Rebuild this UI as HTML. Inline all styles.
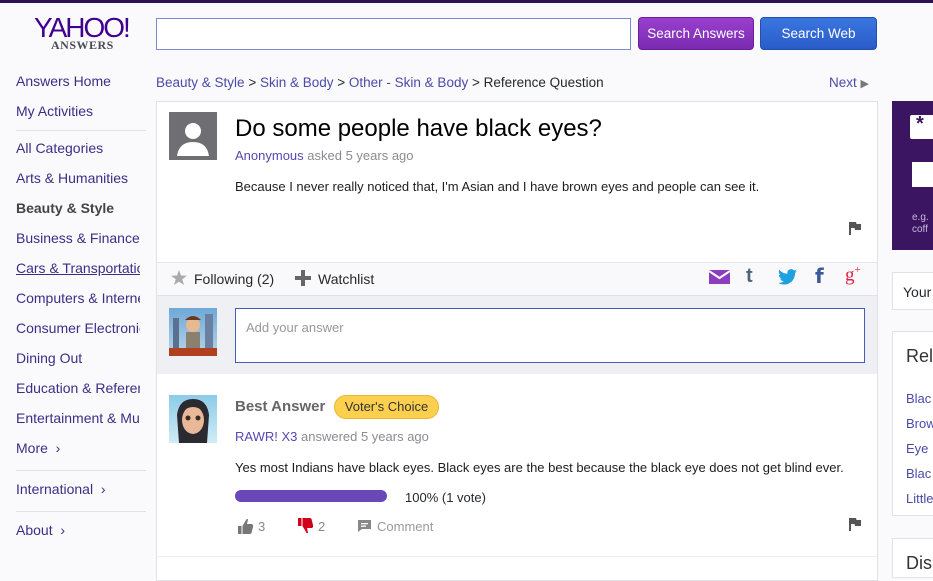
<!DOCTYPE html>
<html><head><meta charset="utf-8"><style>
*{margin:0;padding:0;box-sizing:border-box}
body{width:933px;height:571px;overflow:hidden;background:#fafafc;font-family:"Liberation Sans",Arial,sans-serif;position:relative;color:#26282a}
.a{position:absolute}
.top{left:0;top:0;width:933px;height:3px;background:#2d1152}
.nav a{position:absolute;left:16px;font-size:14px;color:#3b2e86;text-decoration:none;white-space:nowrap;width:124px;overflow:hidden;display:block}
.hr{position:absolute;left:16px;width:130px;height:1px;background:#e2e2e6}
.bc{font-size:13.5px;color:#4a4aa8}
.panel{left:156px;top:101px;width:722px;height:480px;background:#fff;border:1px solid #e2e2e6}
.mb{color:#5548b0}
.gray{color:#8b8b93}
</style></head><body>
<div class="a top"></div>
<div class="a" style="left:34px;top:13px;font-size:28px;color:#400090;letter-spacing:-2px;line-height:30px">YAHOO!</div>
<div class="a" style="left:51px;top:38px;font-size:12px;color:#4a4a55;font-family:'Liberation Serif',serif;font-weight:bold;letter-spacing:0.5px">ANSWERS</div>
<div class="a" style="left:156px;top:18px;width:475px;height:32px;border:1px solid #7b8ad0;background:#fff"></div>
<div class="a" style="left:638px;top:17px;width:116px;height:33px;border-radius:4px;background:linear-gradient(#9a3fcf,#7a2bb0);border:1px solid #6a1f9a;color:#fff;font-size:13.5px;text-align:center;line-height:31px">Search Answers</div>
<div class="a" style="left:760px;top:17px;width:117px;height:33px;border-radius:4px;background:linear-gradient(#3a76e0,#2a5cc8);border:1px solid #2350b0;color:#fff;font-size:13.5px;text-align:center;line-height:31px">Search Web</div>
<div class="nav">
<a style="top:73px">Answers Home</a>
<a style="top:103px">My Activities</a>
<div class="hr" style="top:130px"></div>
<a style="top:140px">All Categories</a>
<a style="top:170px">Arts &amp; Humanities</a>
<a style="top:200px;font-weight:bold;color:#444">Beauty &amp; Style</a>
<a style="top:230px">Business &amp; Finance</a>
<a style="top:260px;text-decoration:underline">Cars &amp; Transportation</a>
<a style="top:290px">Computers &amp; Internet</a>
<a style="top:320px">Consumer Electronics</a>
<a style="top:350px">Dining Out</a>
<a style="top:380px">Education &amp; Reference</a>
<a style="top:410px">Entertainment &amp; Music</a>
<a style="top:440px">More &nbsp;›</a>
<div class="hr" style="top:470px"></div>
<a style="top:481px">International &nbsp;›</a>
<div class="hr" style="top:511px"></div>
<a style="top:522px">About &nbsp;›</a>
</div>
<div class="a bc" style="left:156px;top:75px"><span>Beauty &amp; Style</span> <span style="color:#26282a">&gt;</span> Skin &amp; Body <span style="color:#26282a">&gt;</span> Other - Skin &amp; Body <span style="color:#26282a">&gt;</span> <span style="color:#26282a">Reference Question</span></div>
<div class="a bc" style="left:829px;top:75px">Next <span style="color:#777;font-size:11px">▶</span></div>
<div class="a panel"></div>
<div class="a" style="left:169px;top:112px;width:48px;height:48px;background:#6f6f73;overflow:hidden"><svg width="48" height="48"><circle cx="24" cy="19" r="8" fill="#fff"/><path d="M8 44 Q10 30 24 30 Q38 30 40 44Z" fill="#fff"/></svg></div>
<div class="a" style="left:235px;top:115px;font-size:24px;color:#000">Do some people have black eyes?</div>
<div class="a" style="left:235px;top:148px;font-size:13px"><span class="mb">Anonymous</span> <span class="gray">asked 5 years ago</span></div>
<div class="a" style="left:235px;top:179px;font-size:13px;color:#1d1d1f">Because I never really noticed that, I'm Asian and I have brown eyes and people can see it.</div>
<svg class="a" style="left:849px;top:222px" width="12" height="13"><rect x="0" y="0" width="2" height="13" fill="#555"/><path d="M2 0 H7 L7.5 2 H12 V8 H6 L5.5 6 H2Z" fill="#555"/></svg>
<div class="a" style="left:157px;top:262px;width:720px;height:33px;background:#f9f9fb;border-top:1px solid #e6e6ea"></div>
<svg class="a" style="left:171px;top:270px" width="16" height="15"><path d="M8 0 L10 5.5 L16 5.7 L11.2 9.3 L13 15 L8 11.6 L3 15 L4.8 9.3 L0 5.7 L6 5.5Z" fill="#aaa"/></svg>
<div class="a" style="left:194px;top:271px;font-size:14px;color:#26282a">Following (2)</div>
<svg class="a" style="left:295px;top:270px" width="16" height="16"><rect x="6" y="0" width="4" height="16" fill="#666"/><rect x="0" y="6" width="16" height="4" fill="#666"/></svg>
<div class="a" style="left:318px;top:271px;font-size:14px">Watchlist</div>
<svg class="a" style="left:709px;top:270px" width="21" height="15"><rect width="21" height="14" fill="#8a3fc0"/><path d="M0 1 L10.5 8 L21 1" stroke="#fff" stroke-width="2" fill="none"/></svg>
<div class="a" style="left:746px;top:265px;font-size:20px;font-weight:bold;color:#50647a">t</div>
<svg class="a" style="left:778px;top:269px" width="19" height="16" viewBox="0 0 24 20"><path d="M24 2.4c-.9.4-1.8.7-2.8.8 1-.6 1.8-1.600 2.2-2.7-1 .6-2 1-3.1 1.2C19.3.7 18 0 16.6 0c-2.7 0-4.9 2.2-4.9 4.9 0 .4 0 .8.1 1.1C7.7 5.8 4.1 3.9 1.7.9c-.4.7-.7 1.6-.7 2.5 0 1.7.9 3.2 2.2 4.1-.8 0-1.6-.2-2.2-.6v.1c0 2.4 1.7 4.4 3.9 4.8-.4.1-.8.2-1.3.2-.3 0-.6 0-.9-.1.6 2 2.4 3.4 4.6 3.4-1.7 1.3-3.8 2.1-6.1 2.1-.4 0-.8 0-1.2-.1 2.2 1.4 4.8 2.2 7.5 2.2 9.1 0 14-7.5 14-14v-.6c1-.7 1.8-1.6 2.5-2.5z" fill="#1da1e0"/></svg>
<div class="a" style="left:815px;top:264px;font-size:20px;font-weight:bold;color:#3b5998;font-family:'DejaVu Sans',sans-serif">f</div>
<div class="a" style="left:845px;top:264px;font-size:19px;color:#dd2244;font-family:'Liberation Serif',serif">g<sup style="font-size:11px">+</sup></div>
<div class="a" style="left:157px;top:295px;width:720px;height:79px;background:#eef0f4;border-top:1px solid #e0e2e8"></div>
<div class="a" style="left:169px;top:308px;width:48px;height:48px;background:linear-gradient(#6fa8d8,#b8d4e8);overflow:hidden"><svg width="48" height="48"><rect x="4" y="10" width="6" height="30" fill="#5a7090"/><rect x="36" y="6" width="8" height="34" fill="#6a80a0"/><circle cx="24" cy="17" r="7" fill="#e8b890"/><path d="M16 12 Q24 4 32 12" fill="#6a3a20"/><rect x="17" y="24" width="14" height="20" fill="#8a8070"/><rect x="0" y="40" width="48" height="8" fill="#b04020"/></svg></div>
<div class="a" style="left:235px;top:308px;width:630px;height:55px;border:1px solid #4a5ab8;background:#fff"></div>
<div class="a" style="left:246px;top:320px;font-size:13px;color:#999">Add your answer</div>
<div class="a" style="left:169px;top:395px;width:48px;height:48px;background:linear-gradient(#8ccbe8,#d0ecf6);overflow:hidden"><svg width="48" height="48"><path d="M10 48 L8 20 Q10 4 24 4 Q38 4 40 20 L38 48Z" fill="#2a2a30"/><ellipse cx="24" cy="25" rx="11" ry="14" fill="#e8b898"/><circle cx="19" cy="23" r="2.5" fill="#3a2a20"/><circle cx="29" cy="23" r="2.5" fill="#3a2a20"/><path d="M14 16 Q24 8 34 16 L34 12 Q24 4 14 12Z" fill="#2a2a30"/></svg></div>
<div class="a" style="left:235px;top:398px;font-size:15px;font-weight:bold;color:#666">Best Answer</div>
<div class="a" style="left:334px;top:395px;width:105px;height:24px;border-radius:12px;background:#fcd04e;border:1px solid #e8b830;font-size:13px;text-align:center;line-height:22px;color:#333">Voter's Choice</div>
<div class="a" style="left:235px;top:429px;font-size:13px"><span class="mb">RAWR! X3</span> <span class="gray">answered 5 years ago</span></div>
<div class="a" style="left:235px;top:460px;font-size:13px;color:#1d1d1f">Yes most Indians have black eyes. Black eyes are the best because the black eye does not get blind ever.</div>
<div class="a" style="left:235px;top:490px;width:152px;height:12px;border-radius:6px;background:#6a48b8"></div>
<div class="a" style="left:405px;top:490px;font-size:13px;color:#26282a">100% (1 vote)</div>
<svg class="a" style="left:238px;top:518px" width="15" height="16"><path d="M0 8 H3.5 V16 H0Z M4.5 8 L8 2 Q9 0 10 1.5 L9 6 H14 Q15.5 7 15 9 L13.5 15 Q13 16 12 16 H4.5Z" fill="#777"/></svg>
<div class="a" style="left:258px;top:519px;font-size:13px;color:#888">3</div>
<svg class="a" style="left:298px;top:518px" width="15" height="17"><path d="M0 0 H3.5 V8 H0Z M4.5 0 H12 Q13 0 13.5 1 L15 7 Q15.5 9 14 10 H9 L10 14.5 Q9 16.5 8 14 L4.5 8Z" fill="#d0021b"/></svg>
<div class="a" style="left:318px;top:519px;font-size:13px;color:#888">2</div>
<svg class="a" style="left:358px;top:520px" width="13" height="12"><path d="M0 0 H13 V9 H4 L0 12Z" fill="#888"/><rect x="3" y="3" width="7" height="1.3" fill="#fff"/><rect x="3" y="5.5" width="5" height="1.3" fill="#fff"/></svg>
<div class="a" style="left:377px;top:519px;font-size:13px;color:#999">Comment</div>
<svg class="a" style="left:849px;top:518px" width="12" height="13"><rect x="0" y="0" width="2" height="13" fill="#555"/><path d="M2 0 H7 L7.5 2 H12 V8 H6 L5.5 6 H2Z" fill="#555"/></svg>
<div class="a" style="left:157px;top:556px;width:720px;height:1px;background:#eee"></div>
<div class="a" style="left:892px;top:101px;width:50px;height:149px;background:#3b1562"></div>
<div class="a" style="left:910px;top:115px;width:30px;height:24px;background:#fff;border-radius:2px"></div>
<div class="a" style="left:916px;top:113px;font-size:20px;font-weight:bold;color:#3b1562">*</div>
<div class="a" style="left:912px;top:162px;width:30px;height:25px;background:#fff"></div>
<div class="a" style="left:912px;top:212px;font-size:10px;color:#c8b8dc;line-height:12px">e.g.<br>coff</div>
<div class="a" style="left:892px;top:272px;width:50px;height:38px;background:#fff;border:1px solid #e2e2e6"></div>
<div class="a" style="left:903px;top:284px;font-size:14px">Your</div>
<div class="a" style="left:892px;top:331px;width:50px;height:185px;background:#fff;border:1px solid #e2e2e6"></div>
<div class="a" style="left:906px;top:346px;font-size:18px;color:#333">Rel</div>
<div class="a" style="left:906px;top:386px;font-size:13px;color:#4a4aa8;line-height:25px">Blac<br>Brow<br>Eye<br>Blac<br>Little</div>
<div class="a" style="left:892px;top:538px;width:50px;height:40px;background:#fff;border:1px solid #e2e2e6"></div>
<div class="a" style="left:906px;top:553px;font-size:18px;color:#333">Dis</div>
</body></html>
